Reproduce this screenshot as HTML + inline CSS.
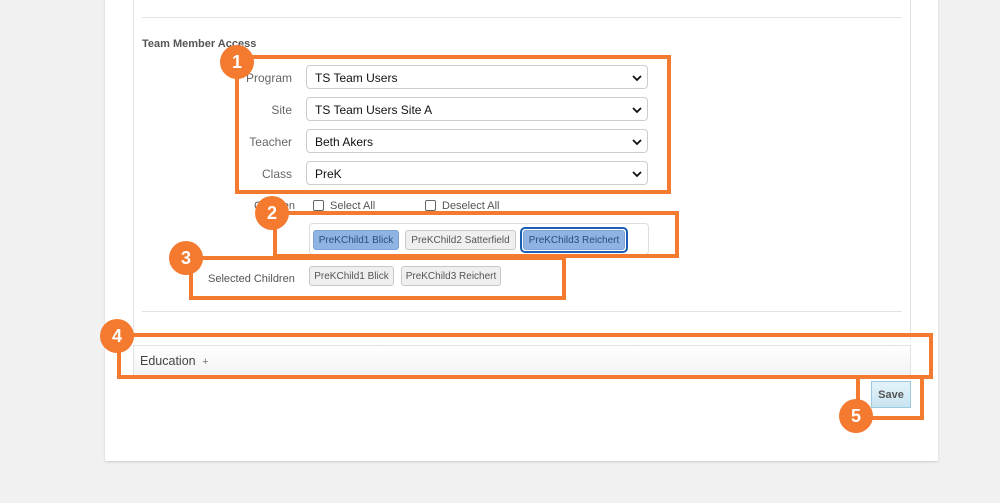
<!DOCTYPE html>
<html><head><style>
*{box-sizing:border-box;margin:0;padding:0}
body{width:1000px;height:503px;background:#f1f1f1;position:relative;overflow:hidden;font-family:"Liberation Sans",sans-serif;color:#555}
.abs{position:absolute}
.card{left:105px;top:-2px;width:833px;height:463px;background:#fff;box-shadow:0 1px 2px rgba(0,0,0,.15)}
.vl{width:1px;background:#e2e2e2}
.hl{height:1px;background:#e2e2e2}
.lbl{font-size:12px;color:#666;text-align:right;width:80px}
.sel{left:306px;width:342px;height:24px;border:1px solid #ccc;border-radius:4px;background:#fff;font-size:12px;color:#111;padding:5px 0 0 8px}
.sel svg{position:absolute;right:5px;top:8px}
.chip{height:20px;border:1px solid #c8c8c8;border-radius:3px;background:#efefef;font-size:10px;color:#555;padding:4px 0 0;text-align:center;white-space:nowrap;overflow:hidden}
.blue{background:#8fb4e3;border-color:#7ea3d3;color:#2d4d7a}
.box{border:4px solid #f47a2f}
.c{width:32px;height:32px;border-radius:50%;background:#f47a2f;color:#fff;font-weight:bold;font-size:18px;text-align:center;line-height:32px}
.cb{width:11px;height:11px;border:1px solid #666;border-radius:2px;background:#fff}
.t11{font-size:11px;color:#555}
</style></head><body>
<div class="abs card"></div>
<div class="abs vl" style="left:133px;top:0;height:340px"></div>
<div class="abs vl" style="left:910px;top:0;height:340px"></div>
<div class="abs hl" style="left:142px;top:17px;width:760px"></div>
<div class="abs hl" style="left:142px;top:311px;width:760px"></div>
<div class="abs" style="left:142px;top:38px;font-size:11px;font-weight:bold;color:#555">Team Member Access</div>

<div class="abs lbl" style="left:212px;top:71px">Program</div>
<div class="abs lbl" style="left:212px;top:103px">Site</div>
<div class="abs lbl" style="left:212px;top:135px">Teacher</div>
<div class="abs lbl" style="left:212px;top:167px">Class</div>
<div class="abs sel" style="top:65px">TS Team Users<svg width="10" height="8"><path d="M1 2l4 4 4-4" stroke="#111" stroke-width="1.8" fill="none"/></svg></div>
<div class="abs sel" style="top:97px">TS Team Users Site A<svg width="10" height="8"><path d="M1 2l4 4 4-4" stroke="#111" stroke-width="1.8" fill="none"/></svg></div>
<div class="abs sel" style="top:129px">Beth Akers<svg width="10" height="8"><path d="M1 2l4 4 4-4" stroke="#111" stroke-width="1.8" fill="none"/></svg></div>
<div class="abs sel" style="top:161px">PreK<svg width="10" height="8"><path d="M1 2l4 4 4-4" stroke="#111" stroke-width="1.8" fill="none"/></svg></div>

<div class="abs t11" style="left:254px;top:200px">Children</div>
<div class="abs cb" style="left:313px;top:200px"></div>
<div class="abs t11" style="left:330px;top:200px">Select All</div>
<div class="abs cb" style="left:425px;top:200px"></div>
<div class="abs t11" style="left:442px;top:200px">Deselect All</div>

<div class="abs" style="left:309px;top:223px;width:340px;height:32px;border:1px solid #ddd;border-radius:4px"></div>
<div class="abs chip blue" style="left:313px;top:230px;width:86px">PreKChild1 Blick</div>
<div class="abs chip" style="left:405px;top:230px;width:111px">PreKChild2 Satterfield</div>
<div class="abs" style="left:520px;top:227px;width:108px;height:26px;border:2px solid #1a5fb4;border-radius:5px"></div>
<div class="abs chip blue" style="left:523px;top:230px;width:102px">PreKChild3 Reichert</div>

<div class="abs" style="left:208px;top:273px;font-size:11px;color:#555">Selected Children</div>
<div class="abs chip" style="left:309px;top:266px;width:85px">PreKChild1 Blick</div>
<div class="abs chip" style="left:401px;top:266px;width:100px">PreKChild3 Reichert</div>

<div class="abs" style="left:133px;top:345px;width:778px;height:31px;border:1px solid #e2e2e2;background:linear-gradient(#fff,#f3f3f3)"></div>
<div class="abs" style="left:140px;top:354px;font-size:12.5px;color:#444">Education <span style="color:#777;font-size:11px">&nbsp;+</span></div>

<div class="abs" style="left:871px;top:381px;width:40px;height:27px;border:1px solid #9ccbe0;background:linear-gradient(#e4f3fa,#c8e4f1);font-size:11px;font-weight:bold;color:#555;text-align:center;line-height:26px">Save</div>

<div class="abs box" style="left:235px;top:55px;width:436px;height:139px"></div>
<div class="abs box" style="left:273px;top:211px;width:406px;height:47px"></div>
<div class="abs box" style="left:189px;top:256px;width:377px;height:44px"></div>
<div class="abs box" style="left:117px;top:333px;width:816px;height:46px"></div>
<div class="abs box" style="left:856px;top:375px;width:68px;height:45px"></div>

<div class="abs c" style="left:220px;top:45px;width:34px;height:34px;line-height:34px">1</div>
<div class="abs c" style="left:255px;top:196px;width:34px;height:34px;line-height:34px">2</div>
<div class="abs c" style="left:169px;top:241px;width:34px;height:34px;line-height:34px">3</div>
<div class="abs c" style="left:100px;top:319px;width:34px;height:34px;line-height:34px">4</div>
<div class="abs c" style="left:839px;top:399px;width:34px;height:34px;line-height:34px">5</div>
</body></html>
